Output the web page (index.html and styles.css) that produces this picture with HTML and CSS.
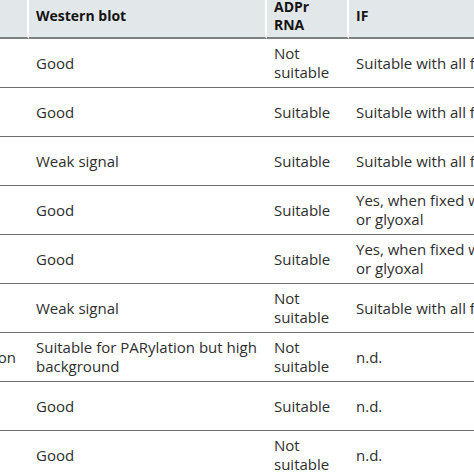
FILE: index.html
```html
<!DOCTYPE html>
<html lang="en">
<head>
<meta charset="utf-8">
<title>Reagent suitability</title>
<link rel="stylesheet" href="styles.css">
</head>
<body>
<table class="grid">
  <colgroup>
    <col class="c-name">
    <col class="c-wb">
    <col class="c-rna">
    <col class="c-if">
  </colgroup>
  <thead>
    <tr>
      <th>Reagent</th>
      <th>Western blot</th>
      <th>ADPr<br>RNA</th>
      <th>IF</th>
    </tr>
  </thead>
  <tbody>
    <tr><td></td><td>Good</td><td>Not suitable</td><td>Suitable with all fixatives</td></tr>
    <tr><td></td><td>Good</td><td>Suitable</td><td>Suitable with all fixatives</td></tr>
    <tr><td></td><td>Weak signal</td><td>Suitable</td><td>Suitable with all fixatives</td></tr>
    <tr><td></td><td>Good</td><td>Suitable</td><td>Yes, when fixed with PFA<br>or glyoxal</td></tr>
    <tr><td></td><td>Good</td><td>Suitable</td><td>Yes, when fixed with PFA<br>or glyoxal</td></tr>
    <tr><td></td><td>Weak signal</td><td>Not suitable</td><td>Suitable with all fixatives</td></tr>
    <tr><td class="name">PAR detection</td><td>Suitable for PARylation but high background</td><td>Not suitable</td><td>n.d.</td></tr>
    <tr><td></td><td>Good</td><td>Suitable</td><td>n.d.</td></tr>
    <tr><td></td><td>Good</td><td>Not suitable</td><td>n.d.</td></tr>
  </tbody>
</table>
</body>
</html>
```
FILE: styles.css
```css
html, body {
  margin: 0;
  padding: 0;
  overflow: hidden;
  background: #ffffff;
}

body {
  width: 474px;
  height: 474px;
  font-family: "Open Sans", "Noto Sans", sans-serif;
  font-size: 15px;
  line-height: 19px;
  color: #2e2e2e;
}

.grid {
  table-layout: fixed;
  border-collapse: separate;
  border-spacing: 0;
  width: 682px;
  margin-top: -5px;
  margin-left: -133px;
}

.c-name { width: 162px; }
.c-wb { width: 238px; }
.c-rna { width: 82px; }
.c-if { width: 200px; }

.grid th {
  box-sizing: border-box;
  height: 44px;
  background: #e2e8ea;
  color: #141414;
  font-size: 14px;
  line-height: 18px;
  font-weight: 700;
  text-align: left;
  vertical-align: middle;
  padding: 0 6px 0 7px;
  border-bottom: 2px solid #7b8082;
  border-right: 2px solid #ffffff;
}

.grid th:last-child {
  border-right: 0;
}

.grid td {
  box-sizing: border-box;
  height: 49px;
  vertical-align: middle;
  text-align: left;
  padding: 0 6px 0 7px;
  border-bottom: 1px solid #6e6e6e;
}

.grid td.name {
  text-align: right;
  padding-right: 13px;
  white-space: nowrap;
}
```
